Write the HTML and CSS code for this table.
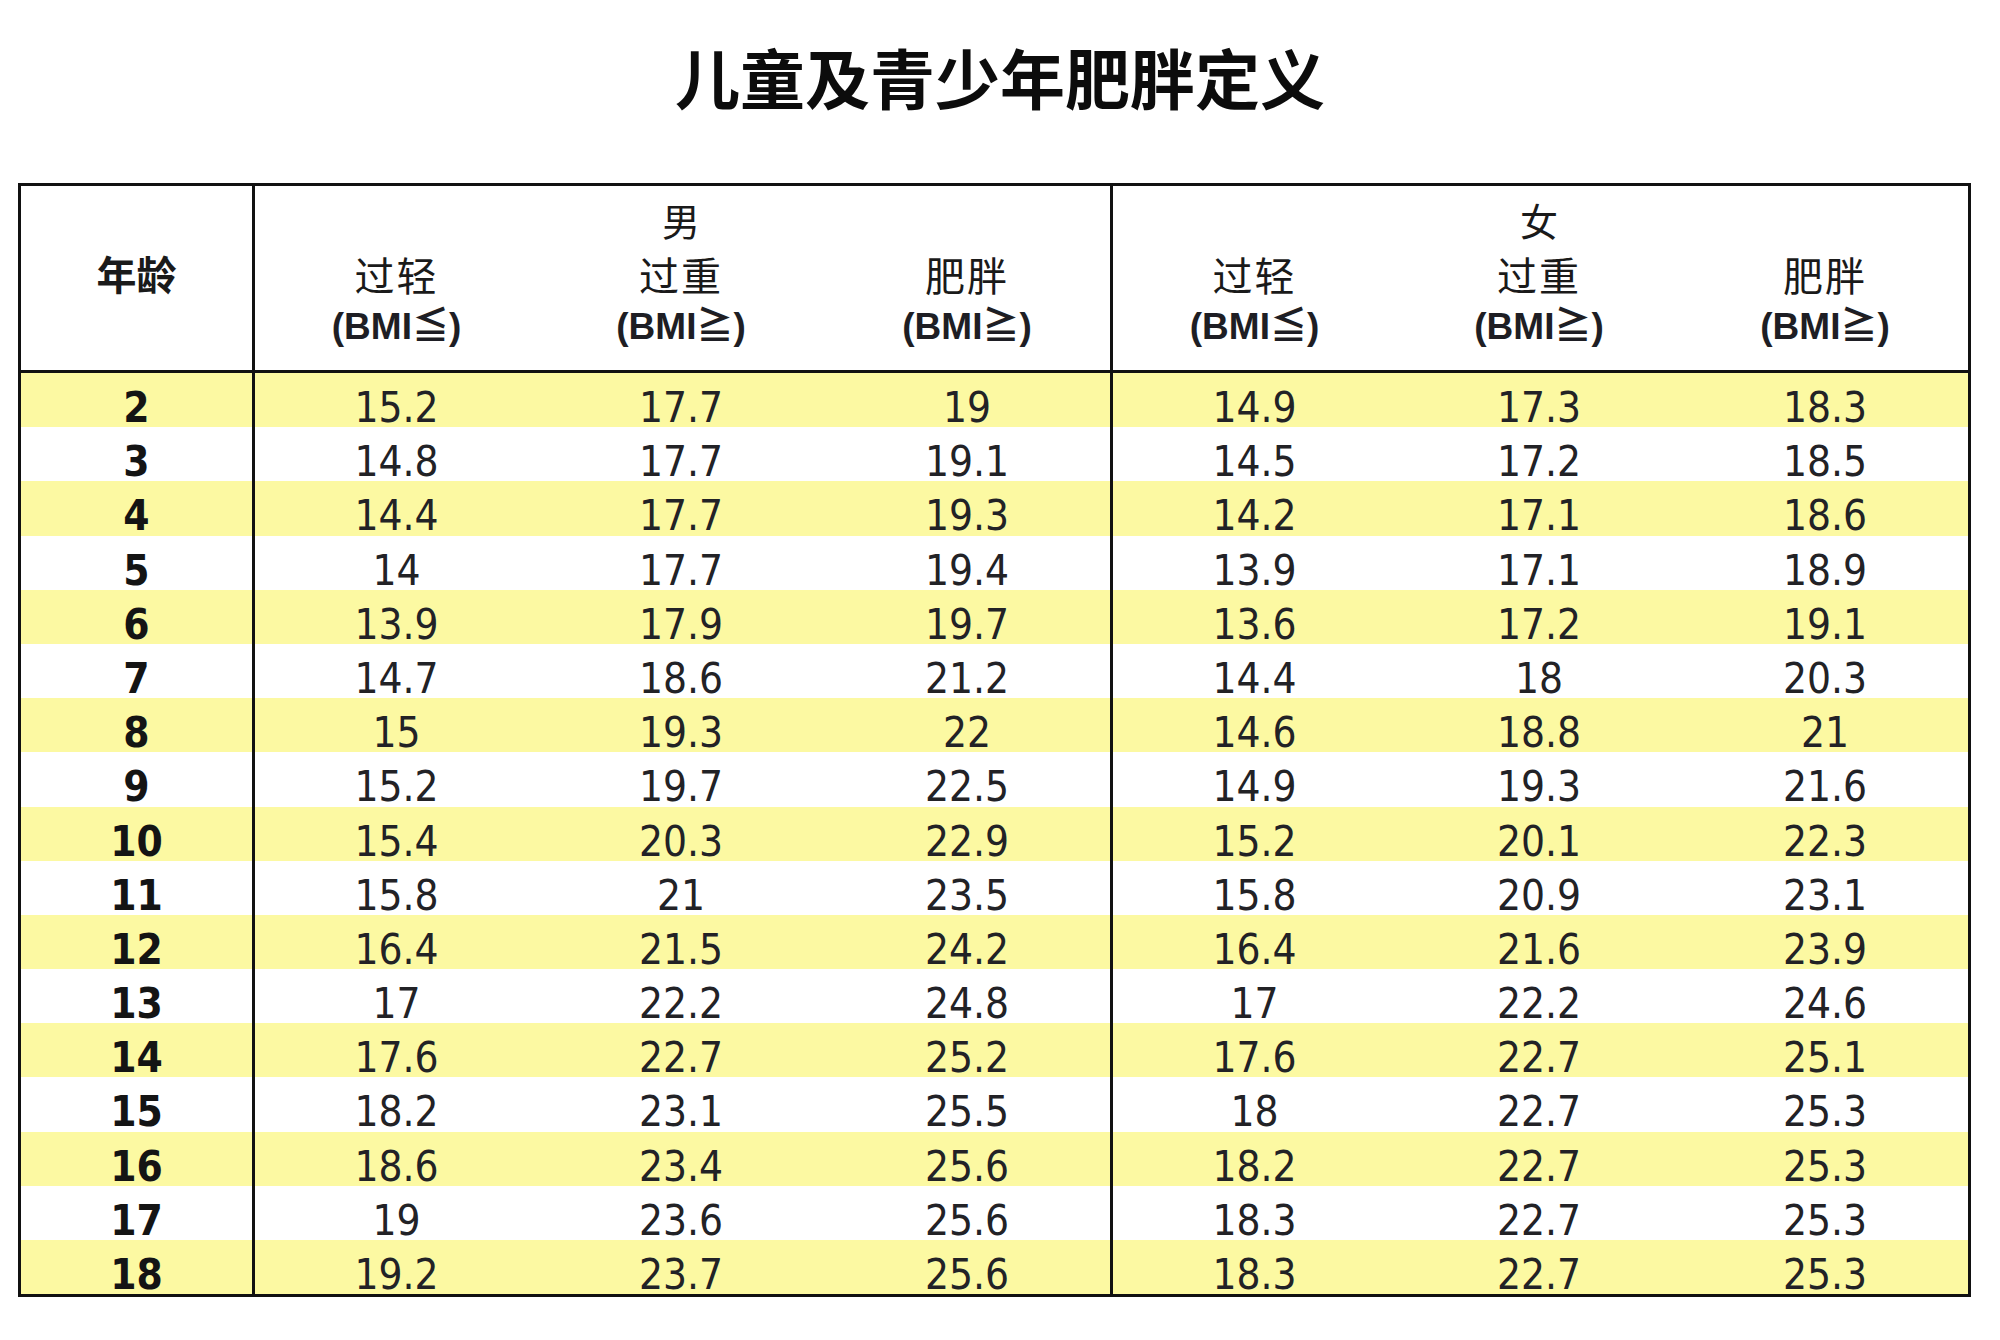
FILE: index.html
```html
<!DOCTYPE html>
<html lang="zh-CN">
<head>
<meta charset="utf-8">
<title>儿童及青少年肥胖定义</title>
<link rel="stylesheet" href="styles.css">
</head>
<body>
<h1 class="title">儿童及青少年肥胖定义</h1>
<table class="bmi-table">
  <colgroup>
    <col class="c-age"><col class="c-val"><col class="c-val"><col class="c-val"><col class="c-val"><col class="c-val"><col class="c-val">
  </colgroup>
  <thead>
    <tr>
      <th class="h-age"><span class="age-label">年龄</span></th>
      <th class="h-sub div-l"><div class="grp">&nbsp;</div><div class="cn">过轻</div><div class="bmi">(BMI≦)</div></th>
      <th class="h-sub"><div class="grp">男</div><div class="cn">过重</div><div class="bmi">(BMI≧)</div></th>
      <th class="h-sub"><div class="grp">&nbsp;</div><div class="cn">肥胖</div><div class="bmi">(BMI≧)</div></th>
      <th class="h-sub div-l"><div class="grp">&nbsp;</div><div class="cn">过轻</div><div class="bmi">(BMI≦)</div></th>
      <th class="h-sub"><div class="grp">女</div><div class="cn">过重</div><div class="bmi">(BMI≧)</div></th>
      <th class="h-sub"><div class="grp">&nbsp;</div><div class="cn">肥胖</div><div class="bmi">(BMI≧)</div></th>
    </tr>
  </thead>
  <tbody>
    <tr class="odd"><td class="age">2</td><td class="div-l">15.2</td><td>17.7</td><td>19</td><td class="div-l">14.9</td><td>17.3</td><td>18.3</td></tr>
    <tr><td class="age">3</td><td class="div-l">14.8</td><td>17.7</td><td>19.1</td><td class="div-l">14.5</td><td>17.2</td><td>18.5</td></tr>
    <tr class="odd"><td class="age">4</td><td class="div-l">14.4</td><td>17.7</td><td>19.3</td><td class="div-l">14.2</td><td>17.1</td><td>18.6</td></tr>
    <tr><td class="age">5</td><td class="div-l">14</td><td>17.7</td><td>19.4</td><td class="div-l">13.9</td><td>17.1</td><td>18.9</td></tr>
    <tr class="odd"><td class="age">6</td><td class="div-l">13.9</td><td>17.9</td><td>19.7</td><td class="div-l">13.6</td><td>17.2</td><td>19.1</td></tr>
    <tr><td class="age">7</td><td class="div-l">14.7</td><td>18.6</td><td>21.2</td><td class="div-l">14.4</td><td>18</td><td>20.3</td></tr>
    <tr class="odd"><td class="age">8</td><td class="div-l">15</td><td>19.3</td><td>22</td><td class="div-l">14.6</td><td>18.8</td><td>21</td></tr>
    <tr><td class="age">9</td><td class="div-l">15.2</td><td>19.7</td><td>22.5</td><td class="div-l">14.9</td><td>19.3</td><td>21.6</td></tr>
    <tr class="odd"><td class="age">10</td><td class="div-l">15.4</td><td>20.3</td><td>22.9</td><td class="div-l">15.2</td><td>20.1</td><td>22.3</td></tr>
    <tr><td class="age">11</td><td class="div-l">15.8</td><td>21</td><td>23.5</td><td class="div-l">15.8</td><td>20.9</td><td>23.1</td></tr>
    <tr class="odd"><td class="age">12</td><td class="div-l">16.4</td><td>21.5</td><td>24.2</td><td class="div-l">16.4</td><td>21.6</td><td>23.9</td></tr>
    <tr><td class="age">13</td><td class="div-l">17</td><td>22.2</td><td>24.8</td><td class="div-l">17</td><td>22.2</td><td>24.6</td></tr>
    <tr class="odd"><td class="age">14</td><td class="div-l">17.6</td><td>22.7</td><td>25.2</td><td class="div-l">17.6</td><td>22.7</td><td>25.1</td></tr>
    <tr><td class="age">15</td><td class="div-l">18.2</td><td>23.1</td><td>25.5</td><td class="div-l">18</td><td>22.7</td><td>25.3</td></tr>
    <tr class="odd"><td class="age">16</td><td class="div-l">18.6</td><td>23.4</td><td>25.6</td><td class="div-l">18.2</td><td>22.7</td><td>25.3</td></tr>
    <tr><td class="age">17</td><td class="div-l">19</td><td>23.6</td><td>25.6</td><td class="div-l">18.3</td><td>22.7</td><td>25.3</td></tr>
    <tr class="odd last"><td class="age">18</td><td class="div-l">19.2</td><td>23.7</td><td>25.6</td><td class="div-l">18.3</td><td>22.7</td><td>25.3</td></tr>
  </tbody>
</table>
</body>
</html>
```
FILE: styles.css
```css
html, body {
  margin: 0;
  padding: 0;
  background: #ffffff;
}

body {
  width: 2000px;
  height: 1340px;
  overflow: hidden;
  font-family: "Noto Sans CJK SC", "DejaVu Sans", sans-serif;
  color: #111;
}

.title {
  margin: 43px 0 0 0;
  height: 66px;
  font-size: 65px;
  line-height: 66px;
  font-weight: 700;
  text-align: center;
  letter-spacing: 0;
  color: #0c0c0c;
  font-family: "Noto Sans CJK SC", sans-serif;
}

.bmi-table {
  margin: 74px 0 0 18px;
  width: 1953px;
  table-layout: fixed;
  border-collapse: separate;
  border-spacing: 0;
  border: 3px solid #111;
}

.c-age { width: 231px; }
.c-val { width: 286px; }

.bmi-table th {
  padding: 6px 0 17px 0;
  vertical-align: top;
  text-align: center;
  font-weight: 400;
  border-bottom: 3px solid #111;
  background: #fff;
}

.bmi-table th.h-age {
  padding-top: 61px;
}

.age-label {
  display: block;
  font-size: 40px;
  line-height: 53px;
  font-weight: 700;
  color: #1a1a1a;
}

.grp, .cn, .bmi {
  white-space: nowrap;
}

.grp {
  height: 56px;
  line-height: 56px;
  font-size: 38px;
  color: #1a1a1a;
}

.cn {
  height: 53px;
  line-height: 53px;
  font-size: 40px;
  letter-spacing: 2px;
  color: #1a1a1a;
}

.bmi {
  height: 52px;
  line-height: 52px;
  font-size: 37px;
  font-weight: 700;
  font-family: "Liberation Sans", "Noto Sans CJK SC", sans-serif;
  color: #1e1e24;
}

.div-l {
  border-left: 3px solid #111;
}

.bmi-table td {
  height: 54.2px;
  box-sizing: border-box;
  padding: 15px 0 0 0;
  vertical-align: top;
  text-align: center;
  font-family: "DejaVu Sans Condensed", "DejaVu Sans", sans-serif;
  font-size: 42px;
  line-height: 39px;
  color: #222226;
}

.bmi-table td.age {
  font-weight: 700;
  color: #141414;
}

.bmi-table tr.odd td {
  background: #fcf9a2;
}

.bmi-table tr.last td {
  height: 50px;
}
```
